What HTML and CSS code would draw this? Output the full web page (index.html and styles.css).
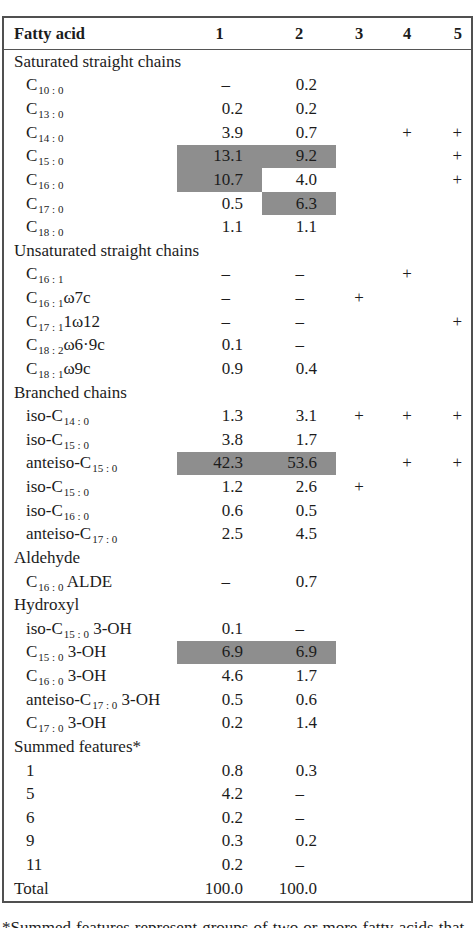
FILE: index.html
```html
<!DOCTYPE html>
<html>
<head>
<meta charset="utf-8">
<link rel="stylesheet" href="styles.css">
</head>
<body>
<div class="frame">
<table class="fa">
<colgroup>
<col class="w-label"><col class="w-1"><col class="w-2"><col class="w-3"><col class="w-4"><col class="w-5">
</colgroup>
<thead>
<tr><th class="label">Fatty acid</th><th>1</th><th>2</th><th>3</th><th>4</th><th class="c5">5</th></tr>
</thead>
<tbody>
<tr class="cat"><td class="label">Saturated straight chains</td><td></td><td></td><td></td><td></td><td></td></tr>
<tr><td class="sub">C<sub>10 : 0</sub></td><td class="n dash">–</td><td class="n">0.2</td><td></td><td></td><td></td></tr>
<tr><td class="sub">C<sub>13 : 0</sub></td><td class="n">0.2</td><td class="n">0.2</td><td></td><td></td><td></td></tr>
<tr><td class="sub">C<sub>14 : 0</sub></td><td class="n">3.9</td><td class="n">0.7</td><td></td><td class="p">+</td><td class="p c5">+</td></tr>
<tr><td class="sub">C<sub>15 : 0</sub></td><td class="n hl">13.1</td><td class="n hl">9.2</td><td></td><td></td><td class="p c5">+</td></tr>
<tr><td class="sub">C<sub>16 : 0</sub></td><td class="n hl">10.7</td><td class="n">4.0</td><td></td><td></td><td class="p c5">+</td></tr>
<tr><td class="sub">C<sub>17 : 0</sub></td><td class="n">0.5</td><td class="n hl">6.3</td><td></td><td></td><td></td></tr>
<tr><td class="sub">C<sub>18 : 0</sub></td><td class="n">1.1</td><td class="n">1.1</td><td></td><td></td><td></td></tr>
<tr class="cat"><td class="label">Unsaturated straight chains</td><td></td><td></td><td></td><td></td><td></td></tr>
<tr><td class="sub">C<sub>16 : 1</sub></td><td class="n dash">–</td><td class="n dash">–</td><td></td><td class="p">+</td><td></td></tr>
<tr><td class="sub">C<sub>16 : 1</sub>ω7c</td><td class="n dash">–</td><td class="n dash">–</td><td class="p">+</td><td></td><td></td></tr>
<tr><td class="sub">C<sub>17 : 1</sub>1ω12</td><td class="n dash">–</td><td class="n dash">–</td><td></td><td></td><td class="p c5">+</td></tr>
<tr><td class="sub">C<sub>18 : 2</sub>ω6·9c</td><td class="n">0.1</td><td class="n dash">–</td><td></td><td></td><td></td></tr>
<tr><td class="sub">C<sub>18 : 1</sub>ω9c</td><td class="n">0.9</td><td class="n">0.4</td><td></td><td></td><td></td></tr>
<tr class="cat"><td class="label">Branched chains</td><td></td><td></td><td></td><td></td><td></td></tr>
<tr><td class="sub">iso-C<sub>14 : 0</sub></td><td class="n">1.3</td><td class="n">3.1</td><td class="p">+</td><td class="p">+</td><td class="p c5">+</td></tr>
<tr><td class="sub">iso-C<sub>15 : 0</sub></td><td class="n">3.8</td><td class="n">1.7</td><td></td><td></td><td></td></tr>
<tr><td class="sub">anteiso-C<sub>15 : 0</sub></td><td class="n hl">42.3</td><td class="n hl">53.6</td><td></td><td class="p">+</td><td class="p c5">+</td></tr>
<tr><td class="sub">iso-C<sub>15 : 0</sub></td><td class="n">1.2</td><td class="n">2.6</td><td class="p">+</td><td></td><td></td></tr>
<tr><td class="sub">iso-C<sub>16 : 0</sub></td><td class="n">0.6</td><td class="n">0.5</td><td></td><td></td><td></td></tr>
<tr><td class="sub">anteiso-C<sub>17 : 0</sub></td><td class="n">2.5</td><td class="n">4.5</td><td></td><td></td><td></td></tr>
<tr class="cat"><td class="label">Aldehyde</td><td></td><td></td><td></td><td></td><td></td></tr>
<tr><td class="sub">C<sub>16 : 0</sub> ALDE</td><td class="n dash">–</td><td class="n">0.7</td><td></td><td></td><td></td></tr>
<tr class="cat"><td class="label">Hydroxyl</td><td></td><td></td><td></td><td></td><td></td></tr>
<tr><td class="sub">iso-C<sub>15 : 0</sub> 3-OH</td><td class="n">0.1</td><td class="n dash">–</td><td></td><td></td><td></td></tr>
<tr><td class="sub">C<sub>15 : 0</sub> 3-OH</td><td class="n hl">6.9</td><td class="n hl">6.9</td><td></td><td></td><td></td></tr>
<tr><td class="sub">C<sub>16 : 0</sub> 3-OH</td><td class="n">4.6</td><td class="n">1.7</td><td></td><td></td><td></td></tr>
<tr><td class="sub">anteiso-C<sub>17 : 0</sub> 3-OH</td><td class="n">0.5</td><td class="n">0.6</td><td></td><td></td><td></td></tr>
<tr><td class="sub">C<sub>17 : 0</sub> 3-OH</td><td class="n">0.2</td><td class="n">1.4</td><td></td><td></td><td></td></tr>
<tr class="cat"><td class="label">Summed features*</td><td></td><td></td><td></td><td></td><td></td></tr>
<tr><td class="sub">1</td><td class="n">0.8</td><td class="n">0.3</td><td></td><td></td><td></td></tr>
<tr><td class="sub">5</td><td class="n">4.2</td><td class="n dash">–</td><td></td><td></td><td></td></tr>
<tr><td class="sub">6</td><td class="n">0.2</td><td class="n dash">–</td><td></td><td></td><td></td></tr>
<tr><td class="sub">9</td><td class="n">0.3</td><td class="n">0.2</td><td></td><td></td><td></td></tr>
<tr><td class="sub">11</td><td class="n">0.2</td><td class="n dash">–</td><td></td><td></td><td></td></tr>
<tr class="cat"><td class="label">Total</td><td class="n">100.0</td><td class="n">100.0</td><td></td><td></td><td></td></tr>
</tbody>
</table>
</div>
<p class="note">*Summed features represent groups of two or more fatty acids that could not be separated by GLC.</p>
</body>
</html>
```
FILE: styles.css
```css
html, body {
  margin: 0;
  padding: 0;
  overflow: hidden;
  background: #fff;
}
body {
  font-family: "Liberation Serif", "Times New Roman", serif;
  font-size: 17px;
  color: #1c1c1c;
}
.frame {
  margin: 16px 0 0 2px;
  width: 471px;
  box-sizing: border-box;
  border: 2px solid #505050;
}
.fa {
  width: 100%;
  border-collapse: collapse;
  table-layout: fixed;
}
.w-label { width: 173px; }
.w-1 { width: 85px; }
.w-2 { width: 74px; }
.w-3 { width: 46px; }
.w-4 { width: 50px; }
.w-5 { width: 39px; }
.fa th {
  height: 31px;
  padding: 0;
  font-weight: bold;
  font-size: 16.5px;
  text-align: center;
  border-bottom: 1px solid #555;
  vertical-align: middle;
}
.fa th.label { text-align: left; padding-left: 10px; }
.fa th.c5 { text-align: right; padding-right: 9px; }
.fa td {
  height: 23.64px;
  padding: 0;
  line-height: 20px;
  vertical-align: middle;
  white-space: nowrap;
}
.fa td.label { padding-left: 10px; }
.fa td.sub { padding-left: 22px; }
.fa td.n { text-align: right; padding-right: 19px; }
.fa td.n.dash { padding-right: 32px; }
.fa td.p { text-align: center; }
.fa td.p.c5 { text-align: right; padding-right: 9px; }
.fa td.hl { background: #8e8e8e; }
.fa sub {
  font-size: 11px;
  line-height: 0;
  vertical-align: -4px;
  margin-left: 1px;
}
.note {
  margin: 15px 0 0 2px;
  line-height: 20px;
  word-spacing: 0.8px;
}
```
